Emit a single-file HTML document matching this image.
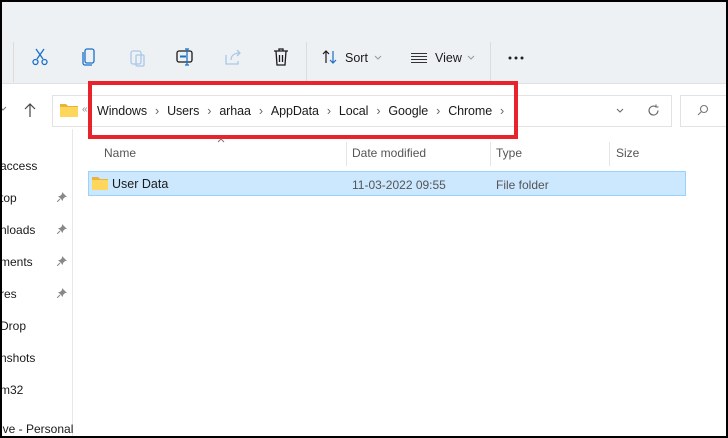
<!DOCTYPE html>
<html><head><style>
body{margin:0;width:728px;height:438px;overflow:hidden;font-family:"Liberation Sans",sans-serif;font-size:12px;color:#1a1a1a;background:#000;position:relative}
.f{position:absolute;left:2px;top:2px;width:724px;height:434px;background:#fff;overflow:hidden}
.tb{position:absolute;left:0;top:0;width:724px;height:81px;background:#eef1f4;border-bottom:1px solid #e0e0e0}
.a{position:absolute}
.sep{position:absolute;width:1px;height:40px;top:40px;background:#dcdcdc}
.t{position:absolute;white-space:nowrap}
.c{color:#666;margin:0 8px}
</style></head><body><div class="f">
<div class="tb">
<div class="sep" style="left:11px"></div><div class="sep" style="left:304px"></div><div class="sep" style="left:488px"></div>
<svg class="a" style="left:28px;top:45px" width="20" height="20" viewBox="0 0 20 20" fill="none" stroke="#1a6fc9" stroke-width="1.3"><path d="M6 2l7 10M14 2L7 12"/><circle cx="5.5" cy="15" r="2.5"/><circle cx="14.5" cy="15" r="2.5"/></svg>
<svg class="a" style="left:78px;top:45px" width="20" height="20" viewBox="0 0 20 20" fill="none" stroke="#1a6fc9" stroke-width="1.3"><rect x="5" y="2" width="9" height="14" rx="2"/><path d="M3 5v11a2 2 0 0 0 2 2h7"/></svg>
<svg class="a" style="left:126px;top:45px" width="20" height="20" viewBox="0 0 20 20" fill="none" stroke="#a9c8e8" stroke-width="1.3"><rect x="3" y="4" width="10" height="13" rx="2"/><rect x="8" y="8" width="8" height="11" rx="1"/></svg>
<svg class="a" style="left:173px;top:45px" width="20" height="20" viewBox="0 0 20 20" fill="none" stroke="#1a1a1a" stroke-width="1.3"><rect x="2" y="4" width="15" height="11" rx="2"/><path d="M5 9.5h6" stroke="#1a6fc9" stroke-width="2"/><path d="M12 2v16M10 2h4M10 18h4" stroke="#1a6fc9"/></svg>
<svg class="a" style="left:221px;top:45px" width="20" height="20" viewBox="0 0 20 20" fill="none" stroke="#a9c8e8" stroke-width="1.3"><path d="M3 8v9h12v-3M8 13c0-5 4-7 9-7M14 3l3 3-3 3"/></svg>
<svg class="a" style="left:269px;top:45px" width="20" height="20" viewBox="0 0 20 20" fill="none" stroke="#1a1a1a" stroke-width="1.3"><path d="M3 4h14M8 4V2h4v2M5 4l1 14h8l1-14M8.5 8v7M11.5 8v7"/></svg>
<svg class="a" style="left:319px;top:47px" width="18" height="16" viewBox="0 0 18 16" fill="none" stroke="#1a1a1a" stroke-width="1.2"><path d="M5 14V2M2 5l3-3 3 3"/><path d="M12 2v12M9 11l3 3 3-3" stroke="#1a6fc9"/></svg>
<div class="t" style="left:343px;top:49px;font-size:12.5px">Sort</div>
<svg class="a" style="left:372px;top:53px" width="8" height="5" viewBox="0 0 8 5" fill="none" stroke="#999"><path d="M1 1l3 3 3-3"/></svg>
<svg class="a" style="left:408px;top:50px" width="18" height="12" viewBox="0 0 18 12" stroke="#333" stroke-width="1"><path d="M1 1.5h16M1 4.5h16M1 7.5h16M1 10.5h16"/></svg>
<div class="t" style="left:433px;top:49px;font-size:12.5px">View</div>
<svg class="a" style="left:465px;top:53px" width="8" height="5" viewBox="0 0 8 5" fill="none" stroke="#999"><path d="M1 1l3 3 3-3"/></svg>
<svg class="a" style="left:505px;top:54px" width="20" height="4" viewBox="0 0 20 4" fill="#222"><circle cx="3" cy="2" r="1.5"/><circle cx="9" cy="2" r="1.5"/><circle cx="15" cy="2" r="1.5"/></svg>
</div>
<svg class="a" style="left:-3px;top:104px" width="8" height="5" viewBox="0 0 8 5" fill="none" stroke="#777"><path d="M1 1l3 3 3-3"/></svg>
<svg class="a" style="left:22px;top:101px" width="12" height="14" viewBox="0 0 12 14" fill="none" stroke="#444" stroke-width="1.2"><path d="M6 14V1M1 6l5-5 5 5"/></svg>
<div class="a" style="left:50px;top:93px;width:620px;height:32px;border:1px solid #e2e2e2;box-sizing:border-box"></div>
<div class="a" style="left:678px;top:93px;width:50px;height:32px;border:1px solid #e2e2e2;box-sizing:border-box"></div>
<svg class="a" style="left:58px;top:101px" width="18" height="14" viewBox="0 0 18 14"><path d="M0 1h6l2 2h10v11H0z" fill="#e8b53a"/><rect x="0" y="4" width="18" height="10" fill="#ffd65c"/></svg>
<div class="t" style="left:80px;top:102px;color:#888;font-size:10px">«</div>
<div class="t" style="left:95px;top:102px;font-size:12.5px;letter-spacing:-0.1px">Windows<span class="c">›</span>Users<span class="c">›</span>arhaa<span class="c">›</span>AppData<span class="c">›</span>Local<span class="c">›</span>Google<span class="c">›</span>Chrome<span class="c">›</span></div>
<svg class="a" style="left:614px;top:106px" width="8" height="5" viewBox="0 0 8 5" fill="none" stroke="#666"><path d="M1 1l3 3 3-3"/></svg>
<svg class="a" style="left:645px;top:102px" width="13" height="13" viewBox="0 0 13 13" fill="none" stroke="#666" stroke-width="1.1"><path d="M11 6.5A4.5 4.5 0 1 1 9 2.8M9 0.5v2.5h2.5"/></svg>
<svg class="a" style="left:695px;top:102px" width="12" height="12" viewBox="0 0 12 12" fill="none" stroke="#777" stroke-width="1.1"><circle cx="7" cy="5" r="3.5"/><path d="M4.5 7.5L1 11"/></svg>
<div class="a" style="left:86px;top:79px;width:430px;height:58px;border:4px solid #e8232b;box-sizing:border-box"></div>
<div class="a" style="left:70px;top:127px;width:1px;height:307px;background:#e8e8e8"></div>
<svg class="a" style="left:215px;top:136px" width="8" height="5" viewBox="0 0 8 5" fill="none" stroke="#777"><path d="M1 4l3-3 3 3"/></svg>
<div class="t" style="left:102px;top:144px;color:#555">Name</div>
<div class="a" style="left:344px;top:140px;width:1px;height:24px;background:#e5e5e5"></div>
<div class="t" style="left:350px;top:144px;color:#555">Date modified</div>
<div class="a" style="left:488px;top:140px;width:1px;height:24px;background:#e5e5e5"></div>
<div class="t" style="left:494px;top:144px;color:#555">Type</div>
<div class="a" style="left:607px;top:140px;width:1px;height:24px;background:#e5e5e5"></div>
<div class="t" style="left:614px;top:144px;color:#555">Size</div>
<div class="a" style="left:86px;top:169px;width:598px;height:25px;background:#cce8ff;border:1px solid #99d1ff;box-sizing:border-box"></div>
<svg class="a" style="left:90px;top:175px" width="16" height="13" viewBox="0 0 16 13"><path d="M0 0h6l2 2h8v11H0z" fill="#e8b53a"/><rect x="0" y="3" width="16" height="10" fill="#ffd65c"/></svg>
<div class="t" style="left:110px;top:175px;font-size:12.5px">User Data</div>
<div class="t" style="left:350px;top:176px;color:#555">11-03-2022 09:55</div>
<div class="t" style="left:494px;top:176px;color:#555">File folder</div>
<div class="t" style="left:-2px;top:157px">access</div>
<div class="t" style="left:-2px;top:189px">top</div>
<div class="t" style="left:-2px;top:221px">nloads</div>
<div class="t" style="left:-2px;top:253px">ments</div>
<div class="t" style="left:-2px;top:285px">res</div>
<svg class="a" style="left:55px;top:190px" width="10" height="10" viewBox="0 0 10 10" fill="#888"><path d="M5 0l5 5-2 0-2 2 0 2-5-5 2 0 2-2z"/><path d="M3 7L0 10" stroke="#888"/></svg>
<svg class="a" style="left:55px;top:222px" width="10" height="10" viewBox="0 0 10 10" fill="#888"><path d="M5 0l5 5-2 0-2 2 0 2-5-5 2 0 2-2z"/><path d="M3 7L0 10" stroke="#888"/></svg>
<svg class="a" style="left:55px;top:254px" width="10" height="10" viewBox="0 0 10 10" fill="#888"><path d="M5 0l5 5-2 0-2 2 0 2-5-5 2 0 2-2z"/><path d="M3 7L0 10" stroke="#888"/></svg>
<svg class="a" style="left:55px;top:286px" width="10" height="10" viewBox="0 0 10 10" fill="#888"><path d="M5 0l5 5-2 0-2 2 0 2-5-5 2 0 2-2z"/><path d="M3 7L0 10" stroke="#888"/></svg>
<div class="t" style="left:-2px;top:317px">Drop</div>
<div class="t" style="left:-2px;top:349px">nshots</div>
<div class="t" style="left:-2px;top:381px">m32</div>
<div class="t" style="left:-2px;top:420px">ive - Personal</div>
</div></body></html>
